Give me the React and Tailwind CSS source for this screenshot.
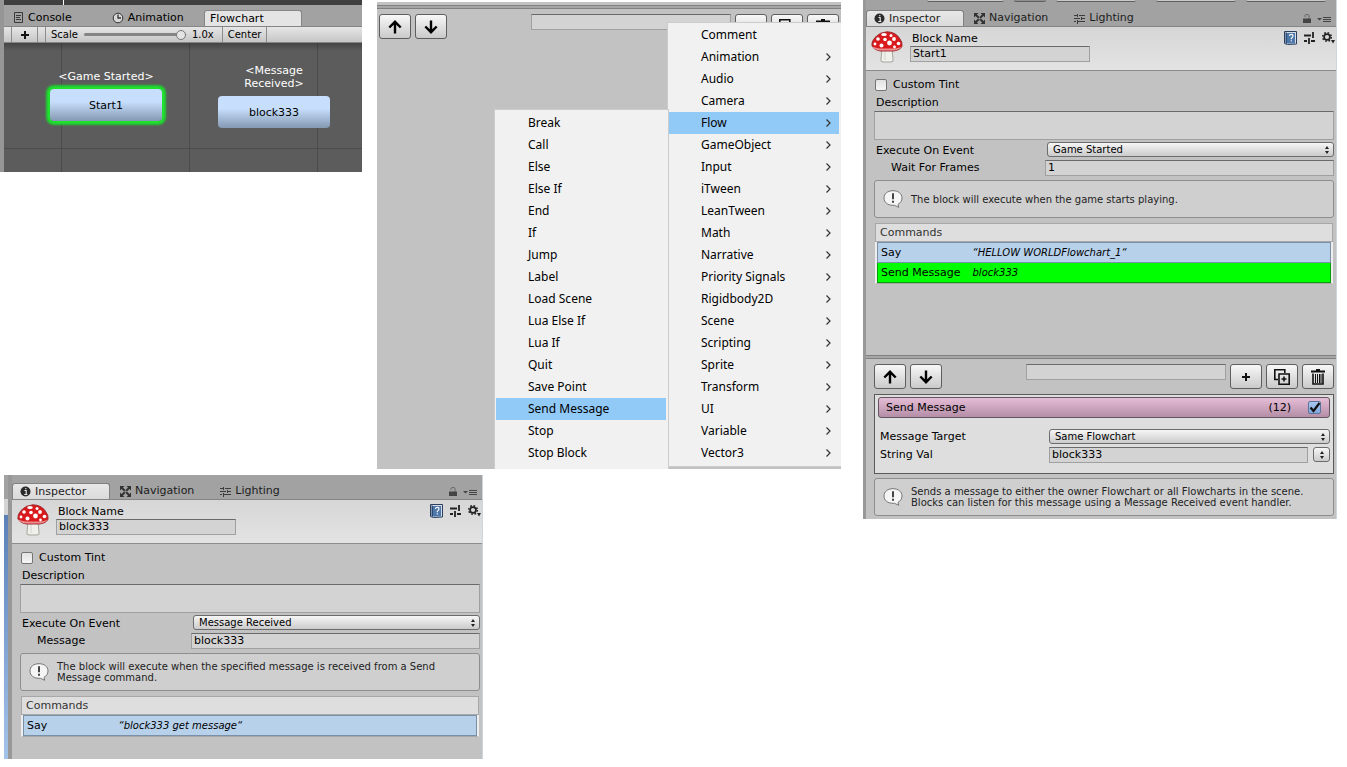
const menuItems = [
  "Comment", "Animation", "Audio", "Camera", "Flow", "GameObject", "Input",
  "iTween", "LeanTween", "Math", "Narrative", "Priority Signals", "Rigidbody2D",
  "Scene", "Scripting", "Sprite", "Transform", "UI", "Variable", "Vector3",
];

const flowItems = [
  "Break", "Call", "Else", "Else If", "End", "If", "Jump", "Label",
  "Load Scene", "Lua Else If", "Lua If", "Quit", "Save Point", "Send Message",
  "Stop", "Stop Block",
];

const fieldClass =
  "min-w-0 rounded-none border border-[#a0a0a0] border-t-[#6a6a6a] bg-[#d3d3d3] px-0.5 outline-none";
const buttonClass =
  "flex h-[25px] w-8 shrink-0 items-center justify-center rounded-[3px] border border-[#5e5e5e] bg-linear-to-b from-[#f8f8f8] to-[#cacaca]";

/* Icons */

function ConsoleIcon() {
  return (
    <svg width="10" height="12" viewBox="0 0 10 12" fill="none" stroke="#3a3a3a">
      <path d="M.5.5h8v10h-8zM2 3.5h5M2 5.5h4M2 7.5h5" />
    </svg>
  );
}

function ClockIcon() {
  return (
    <svg width="12" height="12" viewBox="0 0 12 12" fill="none" stroke="#333">
      <circle cx="6" cy="6" r="4.8" fill="#d8d8d8" />
      <path d="M6 2.5V6h3" strokeWidth="1.3" />
    </svg>
  );
}

function InfoIcon() {
  return (
    <svg width="11" height="11" viewBox="0 0 11 11">
      <circle cx="5.5" cy="5.5" r="5" fill="#2a2a2a" />
      <path d="M4.5 4.5h1.7v4M4.3 8.5h3M5.8 2v1.3" stroke="#eee" strokeWidth="1.1" fill="none" />
    </svg>
  );
}

function NavigationIcon() {
  return (
    <svg width="11" height="11" viewBox="0 0 11 11">
      <path d="M1 1l9 9M10 1l-9 9" stroke="#333" strokeWidth="2" />
      <path d="M0 0h4.5L0 4.5zM11 0v4.5L6.5 0zM0 11V6.5L4.5 11zM11 11H6.5L11 6.5z" fill="#333" />
      <circle cx="5.5" cy="5.5" r="1.1" fill="#a2a2a2" />
    </svg>
  );
}

function LightingIcon() {
  return (
    <svg width="11" height="11" viewBox="0 0 11 11" stroke="#3c3c3c" fill="none">
      <path d="M0 2.5h3M5 2.5h6M0 5.5h6M8 5.5h3M0 8.5h2M4 8.5h7M3.5 1v3M7.5 4v3M3.5 7v4" />
    </svg>
  );
}

function LockIcon() {
  return (
    <svg width="8" height="9" viewBox="0 0 8 9">
      <path d="M2 3V1.5Q2 .5 4 .5t2 1V5" stroke="#666" fill="none" />
      <path d="M0 4.5h8V9H0z" fill="#444" />
    </svg>
  );
}

function PaneMenuIcon() {
  return (
    <svg width="14" height="7" viewBox="0 0 14 7">
      <path d="M0 2h5L2.5 4.5z" fill="#444" />
      <path d="M6 1.5h8M6 3.5h8M6 5.5h8" stroke="#444" />
    </svg>
  );
}

function MushroomIcon() {
  return (
    <svg width="32" height="32" viewBox="0 0 32 32" className="shrink-0">
      <path d="M11 18h10l1 10q1 3-2 3h-8q-3 0-2-3z" fill="#f1f1ec" stroke="#a5a59e" />
      <path d="M14 20v9" stroke="#d4d4ce" />
      <path d="M1 15Q0 11 4 6.5 9 1 16 .8 24 1 28 6.5q4 5 3 9-2 3.7-8 4.5H9Q3 19 1 15z" fill="#d9191c" stroke="#9c3034" />
      <path d="M1.500 15.500q1 3 7.500 4h14q6-1 7.500-4-2 1.500-7.500 2H9Q4 17 1.500 15.500z" fill="#e98d8d" />
      <g fill="#fff">
        <ellipse cx="13" cy="3.5" rx="2.8" ry="1.5" />
        <circle cx="20" cy="4.5" r="1.5" />
        <circle cx="7" cy="8" r="1.8" />
        <circle cx="14" cy="8.5" r="1.8" />
        <circle cx="23" cy="8" r="1.9" />
        <circle cx="18.5" cy="12" r="2.4" />
        <circle cx="10.5" cy="14.5" r="2" />
        <circle cx="4" cy="13" r="1.4" />
        <circle cx="27.5" cy="12.5" r="1.8" />
        <circle cx="23.5" cy="16" r="1.4" />
      </g>
    </svg>
  );
}

function BookIcon() {
  return (
    <svg width="13" height="14" viewBox="0 0 13 14">
      <path d="M.5.5h12v12.5l-9 .5-3-1z" fill="#d5dde8" stroke="#2c3e5c" />
      <path d="M3 2h8v10.5H3z" fill="#4d76a9" />
      <path d="M1.500 1v11l1.500 1V2z" fill="#2d4a75" />
      <path d="M5.500 5q0-1.600 1.800-1.600T9 4.900q0 1.200-1.700 2.300v1M7.300 9.300v1.300" stroke="#fff" fill="none" strokeWidth="1.1" />
    </svg>
  );
}

function PresetIcon() {
  return (
    <svg width="11" height="12" viewBox="0 0 11 12" fill="none" stroke="#222">
      <path d="M0 3.5h7M9 0v6M0 9h3M5 6v6M7 9h4" strokeWidth="1.8" />
    </svg>
  );
}

function GearIcon() {
  return (
    <svg width="13" height="12" viewBox="0 0 13 12">
      <circle cx="5" cy="5" r="2.9" fill="none" stroke="#222" strokeWidth="1.7" />
      <circle cx="5" cy="5" r="4.3" fill="none" stroke="#222" strokeWidth="1.5" strokeDasharray="1.7 1.677" />
      <path d="M9 8h4l-2 3.5z" fill="#222" />
    </svg>
  );
}

function BubbleIcon() {
  return (
    <svg width="20" height="18" viewBox="0 0 20 18" className="shrink-0">
      <path d="M10 .7c5.300 0 9 3 9 7.300 0 3-1.500 5-4 6.300l.7 3-4.200-2H10C4.500 15.300 1 12.300 1 8S4.500.7 10 .7z" fill="#f5f5f5" stroke="#777" />
      <path d="M10 3.300v6M10 10.700v2" stroke="#444" strokeWidth="2" />
    </svg>
  );
}

function ArrowIcon({ down }) {
  return (
    <svg width="14" height="14" viewBox="0 0 14 14" className={down ? "rotate-180" : ""}>
      <path d="M7 13.500V2M1.300 7.500L7 1.800l5.700 5.700" fill="none" stroke="#000" strokeWidth="2.4" />
    </svg>
  );
}

function PlusIcon() {
  return (
    <svg width="8" height="8" viewBox="0 0 8 8">
      <path d="M4 0v8M0 4h8" stroke="#111" strokeWidth="2" />
    </svg>
  );
}

function DuplicateIcon() {
  return (
    <svg width="16" height="16" viewBox="0 0 16 16" fill="none" stroke="#111" strokeWidth="1.6">
      <path d="M4 10.500H.8V.8h10V4M5 5h10.200v10.200H5zM10 7.500v5M7.500 10h5" />
    </svg>
  );
}

function TrashIcon() {
  return (
    <svg width="14" height="16" viewBox="0 0 14 16" fill="none" stroke="#111">
      <path d="M0 2.500h14M5 1h4" strokeWidth="1.8" />
      <path d="M2 4.500v10.500h10V4.500" strokeWidth="1.6" />
      <path d="M4.500 5v9M6.500 5v9M8.500 5v9M10 5v9" />
    </svg>
  );
}

function UpDownIcon() {
  return (
    <svg width="4" height="8" viewBox="0 0 4 8" fill="#222">
      <path d="M2 0l2 3H0zM0 5h4L2 8z" />
    </svg>
  );
}

/* Shared editor controls */

function Popup({ id, value }) {
  return (
    <div className="relative h-[15px] min-w-0 flex-1">
      <select
        id={id}
        className="block h-full w-full appearance-none rounded-[3px] border border-[#6c6c6c] bg-linear-to-b from-[#f6f6f6] to-[#cbcbcb] pr-4 pl-[5px] text-[10px] leading-[13px] outline-none"
      >
        <option>{value}</option>
      </select>
      <span className="pointer-events-none absolute inset-y-0 right-[5px] flex items-center">
        <UpDownIcon />
      </span>
    </div>
  );
}

function HelpBox({ children }) {
  return (
    <div className="flex h-[38px] items-center gap-2 rounded-[3px] border border-[#8e8e8e] bg-[#cfcfcf] pr-4 pl-2">
      <BubbleIcon />
      <p className="text-[10px] leading-[11px] text-[#222]">{children}</p>
    </div>
  );
}

function Splitter() {
  return <div className="h-1 border-y border-[#808080] bg-[#a6a6a6]" />;
}

function CommandToolbar({ pressed }) {
  return (
    <div className="flex items-start gap-1 pt-[5px]">
      <button type="button" aria-label="Previous command" className={buttonClass}>
        <ArrowIcon />
      </button>
      <button type="button" aria-label="Next command" className={buttonClass}>
        <ArrowIcon down />
      </button>
      <input aria-label="Search commands" className={`${fieldClass} ml-auto h-4 w-[200px]`} />
      <button
        type="button"
        aria-label="Add command"
        className={pressed ? `${buttonClass} from-[#909090] to-[#b5b5b5]` : buttonClass}
      >
        <PlusIcon />
      </button>
      <button type="button" aria-label="Duplicate command" className={buttonClass}>
        <DuplicateIcon />
      </button>
      <button type="button" aria-label="Delete command" className={buttonClass}>
        <TrashIcon />
      </button>
    </div>
  );
}

function InspectorTabs() {
  return (
    <div className="flex h-4 items-center text-[#1c1c1c]">
      <button
        type="button"
        className="flex h-4 w-[98px] items-center gap-1 rounded-t-[3px] border border-b-0 border-[#818181] bg-linear-to-b from-[#e8e8e8] to-[#dadada] pl-[7px]"
      >
        <InfoIcon />
        Inspector
      </button>
      <button type="button" className="ml-2.5 flex items-center gap-1">
        <NavigationIcon />
        Navigation
      </button>
      <button type="button" className="ml-[26px] flex items-center gap-1">
        <LightingIcon />
        Lighting
      </button>
      <div className="mr-[5px] ml-auto flex items-end gap-1.5">
        <LockIcon />
        <PaneMenuIcon />
      </div>
    </div>
  );
}

function Inspector({ id, name, event, paramLabel, paramValue, help, commands }) {
  return (
    <>
      <InspectorTabs />
      <header className="flex h-[45px] items-start border-t border-b border-t-[#858585] border-b-[#8c8c8c] bg-linear-to-b from-[#d6d6d6] to-[#e3e3e3] pt-1 pr-px pl-[5px]">
        <MushroomIcon />
        <div className="ml-[7px] flex w-[180px] flex-col">
          <label htmlFor={`${id}-name`} className="pl-0.5 leading-[15px]">
            Block Name
          </label>
          <input id={`${id}-name`} defaultValue={name} className={`${fieldClass} h-4`} />
        </div>
        <div className="ml-auto flex items-center gap-[7px]">
          <BookIcon />
          <PresetIcon />
          <GearIcon />
        </div>
      </header>

      <div className="pt-[5px] pr-0.5 pl-2">
        <div className="flex h-[18px] items-center gap-1.5 pl-px">
          <input
            id={`${id}-tint`}
            type="checkbox"
            className="size-3 appearance-none rounded-[2px] border border-[#757575] bg-linear-to-b from-[#e2e2e2] to-[#f6f6f6]"
          />
          <label htmlFor={`${id}-tint`}>Custom Tint</label>
        </div>
        <label htmlFor={`${id}-desc`} className="block pl-0.5 leading-[17px]">
          Description
        </label>
        <textarea id={`${id}-desc`} className={`${fieldClass} block h-[29px] w-full resize-none`} />
        <div className="mt-0.5 flex h-[18px]">
          <label htmlFor={`${id}-event`} className="w-[173px] shrink-0 pl-0.5 leading-[18px]">
            Execute On Event
          </label>
          <Popup id={`${id}-event`} value={event} />
        </div>
        <div className="flex h-4">
          <label htmlFor={`${id}-param`} className="w-[171px] shrink-0 pl-[17px] leading-4">
            {paramLabel}
          </label>
          <input id={`${id}-param`} defaultValue={paramValue} className={`${fieldClass} flex-1`} />
        </div>
        <div className="pt-1 pb-[5px]">
          <HelpBox>{help}</HelpBox>
        </div>

        <div className="px-px">
          <h2
            id={`${id}-commands`}
            className="h-[19px] border border-[#a8a8a8] bg-[#dedede] pl-1 leading-[18px] text-[#333]"
          >
            Commands
          </h2>
          <div className="border-x-2 border-b border-x-[#eee] border-b-[#a8a8a8]">
            <table
              aria-labelledby={`${id}-commands`}
              className="w-full table-fixed border-collapse text-left"
            >
              <tbody>
                {commands.map((c) => (
                  <tr
                    key={c.type}
                    className={
                      c.active
                        ? "border border-[#0a9a0a] bg-[#00ff00]"
                        : "border border-[#7990a8] bg-[#b7d1eb]"
                    }
                  >
                    <td className="h-5 w-[95px] p-0 pl-[3px] leading-[19px] whitespace-nowrap">{c.type}</td>
                    <td className="p-0 text-[10px] leading-[19px] italic">{c.summary}</td>
                  </tr>
                ))}
              </tbody>
            </table>
          </div>
        </div>
      </div>
    </>
  );
}

/* Flowchart window */

function FlowNode({ event, name, selected, className }) {
  return (
    <div className={`absolute flex w-28 flex-col items-center ${className}`}>
      <span className="mb-1.5 text-center leading-[13px] text-white">{event}</span>
      <button
        type="button"
        className={`h-8 w-full rounded-[4px] bg-linear-to-b from-[#c7dffd] from-40% to-[#8499b2] pt-0.5 ${
          selected ? "shadow-[0_0_0_2px_#20e030,0_0_2px_4px_#20d030]" : ""
        }`}
      >
        {name}
      </button>
    </div>
  );
}

function FlowchartWindow() {
  return (
    <section className="h-[172px] border-l-4 border-[#969696] bg-[#a2a2a2]">
      <div className="flex h-[5px] bg-[#3f3f3f]">
        <div className="ml-[59px] h-full w-px bg-white" />
      </div>
      <div className="flex h-[21px] items-end">
        <button type="button" className="ml-2.5 flex h-4 items-center gap-1">
          <ConsoleIcon />
          Console
        </button>
        <button type="button" className="ml-10 flex h-4 items-center gap-1">
          <ClockIcon />
          Animation
        </button>
        <button
          type="button"
          className="mr-[60px] ml-auto h-4 w-[98px] rounded-t-[3px] border border-b-0 border-[#858585] bg-[#e4e4e4] pl-[5px] text-left leading-[15px]"
        >
          Flowchart
        </button>
      </div>
      <div className="flex h-[17px] items-center border-t border-b border-[#858585] bg-linear-to-b from-[#e6e6e6] to-[#c6c6c6] pl-[7px] text-[10px]">
        <button
          type="button"
          aria-label="Add block"
          className="flex h-full w-[27px] items-center justify-center border-x border-[#8c8c8c]"
        >
          <PlusIcon />
        </button>
        <div className="ml-[7px] flex h-full items-center border-x border-[#8c8c8c] pr-2 pl-[5px]">
          <label htmlFor="scale">Scale</label>
          <input
            id="scale"
            type="range"
            defaultValue={100}
            className="mx-1.5 h-3 w-[102px] appearance-none bg-transparent [&::-webkit-slider-runnable-track]:h-[3px] [&::-webkit-slider-runnable-track]:rounded-full [&::-webkit-slider-runnable-track]:bg-[#858585] [&::-webkit-slider-thumb]:-mt-[3px] [&::-webkit-slider-thumb]:size-[10px] [&::-webkit-slider-thumb]:appearance-none [&::-webkit-slider-thumb]:rounded-full [&::-webkit-slider-thumb]:border [&::-webkit-slider-thumb]:border-[#777] [&::-webkit-slider-thumb]:bg-[#e4e4e4]"
          />
          <span>1.0x</span>
        </div>
        <button type="button" className="h-full border-r border-[#8c8c8c] px-[5px]">
          Center
        </button>
      </div>
      <div className="relative h-[129px] overflow-hidden bg-[#5c5c5c] bg-[linear-gradient(to_right,#4b4b4b_1px,transparent_1px),linear-gradient(to_bottom,#4b4b4b_1px,transparent_1px)] bg-[size:128px_128px] bg-[position:57px_105px]">
        <div className="absolute inset-x-0 top-0 h-2 bg-linear-to-b from-black/25 to-transparent" />
        <FlowNode event="<Game Started>" name="Start1" selected className="top-[27px] left-[46px]" />
        <FlowNode event="<Message Received>" name="block333" className="top-[21px] left-[214px]" />
      </div>
    </section>
  );
}

/* Add-command menu */

function Menu({ items, active, arrows, className }) {
  return (
    <ul
      role="menu"
      className={`absolute border border-[#cccccc] bg-[#f1f1f1] font-['Noto_Sans',sans-serif] text-[12px] ${className}`}
    >
      {items.map((item) => (
        <li
          key={item}
          role="menuitem"
          className={`flex h-[22px] items-center justify-between pr-2 pl-8 ${
            item === active ? "bg-[#91c9f7]" : ""
          }`}
        >
          {item}
          {arrows && item !== "Comment" && (
            <svg width="5" height="8" viewBox="0 0 5 8" fill="none" stroke="#333" strokeWidth="1.2">
              <path d="M.5.5L4 4 .5 7.500" />
            </svg>
          )}
        </li>
      ))}
    </ul>
  );
}

function CommandMenuWindow() {
  return (
    <section className="relative mt-0.5 h-[467px] overflow-hidden bg-[#c2c2c2] pt-[3px]">
      <Splitter />
      <div className="px-0.5">
        <CommandToolbar pressed />
      </div>
      <Menu
        items={menuItems}
        active="Flow"
        arrows
        className="top-5 right-0 w-[174px] border-r-0 pt-px pr-0.5 pb-0.5 pl-px"
      />
      <Menu
        items={flowItems}
        active="Send Message"
        className="top-[107px] right-[172px] w-[175px] pt-0.5 pr-0.5 pb-1.5 pl-px"
      />
    </section>
  );
}

function SendMessageEditor() {
  return (
    <div className="border border-[#5a5a5a] bg-[#dedede] px-[3px] pt-0.5 pb-2.5">
      <div className="flex h-[21px] items-center rounded-[3px] border border-[#625560] bg-linear-to-b from-[#e6bdd6] to-[#b48da7] pr-2 pl-[7px]">
        <span>Send Message</span>
        <span className="ml-auto">(12)</span>
        <span className="relative ml-[17px] size-[13px]">
          <input
            type="checkbox"
            aria-label="Command enabled"
            defaultChecked
            className="block size-[13px] appearance-none rounded-[2px] border border-[#5d7399] bg-linear-to-b from-[#a8c8f0] to-[#7fa6dc]"
          />
          <svg width="13" height="13" viewBox="0 0 13 13" className="pointer-events-none absolute inset-0">
            <path d="M2.500 6.500L5.500 10 11.500 2" fill="none" stroke="#111" strokeWidth="2.2" />
          </svg>
        </span>
      </div>
      <div className="mt-[11px] flex h-[18px]">
        <label htmlFor="message-target" className="w-[171px] shrink-0 pl-0.5 leading-4">
          Message Target
        </label>
        <Popup id="message-target" value="Same Flowchart" />
      </div>
      <div className="flex h-4">
        <label htmlFor="string-val" className="w-[171px] shrink-0 pl-0.5 leading-4">
          String Val
        </label>
        <input id="string-val" defaultValue="block333" className={`${fieldClass} flex-1`} />
        <button
          type="button"
          aria-label="Pick variable"
          className="ml-[5px] flex h-[15px] w-[17px] items-center justify-center rounded-[3px] border border-[#6c6c6c] bg-linear-to-b from-[#f6f6f6] to-[#cbcbcb]"
        >
          <UpDownIcon />
        </button>
      </div>
    </div>
  );
}

export default function App() {
  return (
    <main className="grid min-h-screen grid-cols-[377fr_486fr_484fr] grid-rows-[auto_1fr] bg-white font-['DejaVu_Sans',sans-serif] text-[11px] leading-4 text-black">
      <div className="pr-[15px]">
        <FlowchartWindow />
      </div>

      <div className="pr-[22px] pb-1.5">
        <CommandMenuWindow />
      </div>

      <div className="row-span-2 pr-2.5">
        <section className="border-r border-l-[3px] border-r-[#cdd5de] border-l-[#989898] bg-[#c2c2c2] pb-[3px]">
          <div className="flex h-2.5 items-start gap-2.5 bg-[#a2a2a2] pl-[61px]">
            <div className="h-0.5 w-[77px] rounded-b border-b border-[#5f5f5f] bg-[#c8c8c8]" />
            <div className="h-0.5 w-8 rounded-b border-b border-[#5f5f5f] bg-[#8e8e8e]" />
            <div className="h-0.5 w-[80px] rounded-b border-b border-[#5f5f5f] bg-[#c8c8c8]" />
            <div className="ml-2.5 h-0.5 w-[80px] rounded-b border-b border-[#5f5f5f] bg-[#c8c8c8]" />
            <div className="h-0.5 w-[80px] rounded-b border-b border-[#5f5f5f] bg-[#c8c8c8]" />
          </div>
          <div className="bg-linear-to-b from-[#a2a2a2] from-[16px] to-[#c2c2c2] to-[16px]">
            <Inspector
              id="start1"
              name="Start1"
              event="Game Started"
              paramLabel="Wait For Frames"
              paramValue="1"
              help="The block will execute when the game starts playing."
              commands={[
                { type: "Say", summary: "“HELLOW WORLDFlowchart_1“" },
                { type: "Send Message", summary: "block333", active: true },
              ]}
            />
          </div>
          <div className="h-[71px]" />
          <Splitter />
          <div className="flex flex-col pr-0.5 pl-2">
            <CommandToolbar />
            <div className="pt-[5px] pb-1">
              <SendMessageEditor />
            </div>
            <HelpBox>
              Sends a message to either the owner Flowchart or all Flowcharts in the scene. Blocks can listen
              for this message using a Message Received event handler.
            </HelpBox>
          </div>
        </section>
      </div>

      <div className="col-span-2 pl-1">
        <section className="flex w-full max-w-[479px]">
          {/* Edge of the window docked to the left */}
          <div className="flex w-1 flex-col">
            <div className="h-6 bg-[#a2a2a2]" />
            <div className="h-4 bg-[#d4d4d4]" />
            <div className="flex-1 bg-linear-to-b from-[#5b80b8] to-[#a3c4ea]" />
          </div>
          <div className="min-w-0 flex-1 border-r border-l-4 border-r-[#cdd5de] border-l-[#989898] bg-linear-to-b from-[#a2a2a2] from-[24px] to-[#c2c2c2] to-[24px] pt-2 pb-[22px]">
            <Inspector
              id="block333"
              name="block333"
              event="Message Received"
              paramLabel="Message"
              paramValue="block333"
              help="The block will execute when the specified message is received from a Send Message command."
              commands={[{ type: "Say", summary: "“block333 get message“" }]}
            />
          </div>
        </section>
      </div>
    </main>
  );
}
